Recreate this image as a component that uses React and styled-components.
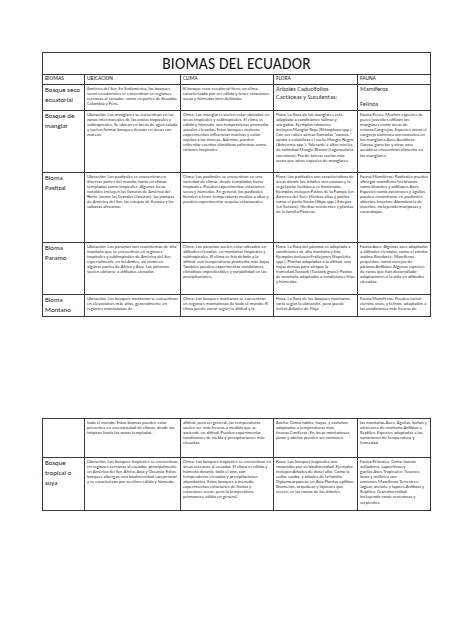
import React from 'react';
import styled, { createGlobalStyle } from 'styled-components';

const GlobalStyle = createGlobalStyle`
    html, body {
        margin: 0;
        padding: 0;
        background: #ffffff;
    }
    body {
        font-family: Carlito, Lato, "Liberation Sans", sans-serif;
        color: #1a1a1a;
    }
`;

const Page = styled.div`
    width: 474px;
    height: 632px;
    overflow: hidden;
    display: flex;
    flex-direction: column;
    padding: ${props => props.$top}px 0 0 42px;
    box-sizing: border-box;
`;

const Table = styled.table`
    width: 388px;
    border-collapse: collapse;
    table-layout: fixed;
    border: 1px solid #3a3a3a;
    flex-shrink: 0;
`;

const Row = styled.tr`
    height: ${props => props.$h}px;
`;

const TitleCell = styled.td`
    border: 1px solid #3a3a3a;
    text-align: center;
    vertical-align: middle;
    font-size: 15.5px;
    font-weight: 300;
    letter-spacing: 0.2px;
    padding: 0;
    color: #111;
`;

const HeadCell = styled.td`
    border: 1px solid #3a3a3a;
    font-size: 5.6px;
    line-height: 6px;
    padding: 1px 2px;
    vertical-align: top;
    text-transform: uppercase;
    color: #222;
`;

const NameCell = styled.td`
    border: 1px solid #3a3a3a;
    font-size: 6.9px;
    line-height: 10px;
    padding: 0 2px;
    vertical-align: top;
    color: #222;
`;

const TextCell = styled.td`
    border: 1px solid #3a3a3a;
    font-size: ${props => (props.$big ? '6.4px' : '4.6px')};
    line-height: ${props => (props.$big ? '7.6px' : '5.1px')};
    padding: 1px 2px;
    vertical-align: top;
    color: #333;
    word-wrap: break-word;
`;

const Clip = styled.div`
    max-height: ${props => props.$max}px;
    overflow: hidden;
`;

const Gap = styled.div`
    height: ${props => props.$h}px;
    flex-shrink: 0;
`;

const widths = [42, 96, 93, 84, 73];

const headers = ['Biomas', 'Ubicacion', 'Clima', 'Flora', 'Fauna'];

const firstPage = [
    {
        h: 62,
        name: 'Bosque de manglar',
        cells: [
            'Ubicación: Los manglares se encuentran en las zonas intermareales de las costas tropicales y subtropicales. Se ubican en áreas de agua salada y suelen formar bosques densos en áreas con mareas.',
            'Clima: Los manglares suelen estar ubicados en áreas tropicales y subtropicales. El clima es cálido y húmedo, con temperaturas promedio anuales elevadas. Estos bosques costeros experimentan influencias marinas y están sujetos a las mareas. Además, pueden enfrentar eventos climáticos extremos como ciclones tropicales.',
            'Flora: La flora de los manglares está adaptada a condiciones salinas y anegadas. Ejemplos comunes incluyen:Manglar Rojo (Rhizophora spp.): Con sus raíces aéreas llamadas "zancos," ayuda a estabilizar el suelo.Mangle Negro (Avicennia spp.): Tolerante a altos niveles de salinidad.Mangle Blanco (Laguncularia racemosa): Puede tolerar suelos más secos que otras especies de manglares.',
            'Fauna:Peces: Muchos especies de peces juveniles utilizan los manglares como áreas de crianza.Cangrejos: Especies como el cangrejo violinista son comunes en los manglares.Aves Acuáticas: Garzas, garcetas y otras aves acuáticas encuentran alimento en los manglares.',
        ],
    },
    {
        h: 70,
        name: 'Bioma Pastizal',
        cells: [
            'Ubicación: Los pastizales se encuentran en diversas partes del mundo, tanto en climas templados como tropicales. Algunas áreas notables incluyen las llanuras de América del Norte (como las Grandes Llanuras), las pampas de América del Sur, las estepas de Eurasia y las sabanas africanas.',
            'Clima: Los pastizales se encuentran en una variedad de climas, desde templados hasta tropicales. Pueden experimentar estaciones secas y húmedas. En general, los pastizales tienden a tener temperaturas medias a altas y pueden experimentar sequías estacionales.',
            'Flora: Los pastizales son característicos de áreas donde los árboles son escasos y la vegetación herbácea es dominante. Ejemplos incluyen:Pastos de la Pampa (en América del Sur): Hierbas altas y pastos como el pasto llorón (Stipa spp.).Estepas (en Eurasia): Hierbas resistentes y plantas de la familia Poaceae.',
            'Fauna:Mamíferos: Pastizales pueden albergar mamíferos herbívoros como bisontes y antílopes.Aves: Especies como avestruces y águilas pueden encontrarse en pastizales abiertos.Insectos: Abundancia de insectos, incluyendo mariposas y escarabajos.',
        ],
    },
    {
        h: 52,
        name: 'Bioma Paramo',
        cells: [
            'Ubicación: Los páramos son ecosistemas de alta montaña que se encuentran en regiones tropicales y subtropicales de América del Sur, especialmente en los Andes, así como en algunas partes de África y Asia. Los páramos suelen ubicarse a altitudes elevadas',
            'Clima: Los páramos suelen estar ubicados en altitudes elevadas, en montañas tropicales y subtropicales. El clima es frío debido a la altitud, con temperaturas promedio más bajas. También pueden experimentar condiciones climáticas impredecibles y variabilidad en las precipitaciones.',
            'Flora: La flora del páramo es adaptada a condiciones de alta montaña y frío. Ejemplos incluyen:Frailejones (Espeletia spp.): Plantas adaptadas a la altitud, con hojas densas para atrapar la humedad.Tussock (Tussock grass): Pastos de montaña adaptados a condiciones frías y húmedas.',
            'Fauna:Aves: Algunas aves adaptadas a altitudes elevadas, como el cóndor andino.Roedores: Mamíferos pequeños, como conejos de páramo.Anfibios: Algunas especies de ranas que han desarrollado adaptaciones a la vida en altitudes elevadas.',
        ],
    },
    {
        h: 22,
        clip: 15,
        name: 'Bioma Montano',
        cells: [
            'Ubicación: Los bosques montanos se encuentran en elevaciones más altas, generalmente en regiones montañosas de',
            'Clima: Los bosques montanos se encuentran en regiones montañosas de todo el mundo. El clima puede variar según la altitud y la',
            'Flora: La flora de los bosques montanos varía según la ubicación, pero puede incluir:Árboles de Hoja',
            'Fauna:Mamíferos: Pueden incluir ciervos, osos, y felinos, adaptados a las condiciones más frescas de',
        ],
    },
];

const secondPage = [
    {
        h: 39,
        name: '',
        cells: [
            'todo el mundo. Estos biomas pueden estar presentes en una variedad de climas, desde los trópicos hasta las zonas templadas.',
            'altitud, pero en general, las temperaturas suelen ser más frescas a medida que se asciende en altitud. Pueden experimentar condiciones de niebla y precipitaciones más elevadas.',
            'Ancha: Como robles, hayas, y castaños, adaptados a temperaturas más frescas.Coníferas: En áreas montañosas, pinos y abetos pueden ser comunes.',
            'las montañas.Aves: Águilas, búhos y otras aves de montaña.Anfibios y Reptiles: Especies adaptadas a las variaciones de temperatura y humedad.',
        ],
    },
    {
        h: 53,
        name: 'Bosque tropical o suya',
        cells: [
            'Ubicación: Los bosques tropicales se encuentran en regiones cercanas al ecuador, principalmente en América del Sur, África, Asia y Oceanía. Estos bosques albergan una biodiversidad excepcional y se caracterizan por su clima cálido y húmedo.',
            'Clima: Los bosques tropicales se encuentran en áreas cercanas al ecuador. El clima es cálido y húmedo durante todo el año, con temperaturas elevadas y precipitaciones abundantes. Estos bosques a menudo experimentan estaciones de lluvias y estaciones secas, pero la temperatura permanece cálida en general.',
            'Flora: Los bosques tropicales son conocidos por su biodiversidad. Ejemplos incluyen:Árboles de dosel alto: Como la ceiba, caoba, y árboles de la familia Dipterocarpaceae en Asia.Plantas epífitas: Bromelias, orquídeas y líquenes que crecen en las ramas de los árboles.',
            'Fauna:Primates: Como monos aulladores, capuchinos y gorilas.Aves Tropicales: Tucanes, loros y colibríes son comunes.Mamíferos Terrestres: Jaguar, ocelote y tapires.Anfibios y Reptiles: Gran diversidad, incluyendo ranas venenosas y serpientes.',
        ],
    },
];

const Cols = () => (
    <colgroup>
        {widths.map((w, i) => <col key={'c' + i} style={{ width: w }} />)}
    </colgroup>
);

const BiomeRow = ({ row }) => (
    <Row $h={row.h}>
        <NameCell>{row.name}</NameCell>
        {row.cells.map((text, i) => (
            <TextCell key={row.name + i}>
                {row.clip ? <Clip $max={row.clip}>{text}</Clip> : text}
            </TextCell>
        ))}
    </Row>
);

const App = () => {
    return (
        <>
            <GlobalStyle />
            <Page $top={52}>
                <Table>
                    <Cols />
                    <tbody>
                        <Row $h={22}>
                            <TitleCell colSpan={5}>BIOMAS DEL ECUADOR</TitleCell>
                        </Row>
                        <Row $h={10}>
                            {headers.map(h => <HeadCell key={h}>{h}</HeadCell>)}
                        </Row>
                        <Row $h={24}>
                            <NameCell>Bosque seco ecuatorial</NameCell>
                            <TextCell>
                                América del Sur: En Sudamérica, los bosques secos ecuatoriales se encuentran en regiones cercanas al ecuador, como en partes de Ecuador, Colombia y Perú.
                            </TextCell>
                            <TextCell>
                                El bosque seco ecuatorial tiene un clima caracterizado por ser cálido y tener estaciones secas y húmedas bien definidas.
                            </TextCell>
                            <TextCell $big>
                                Árboles Caducifolios<br />Cactáceas y Suculentas:
                            </TextCell>
                            <TextCell $big>
                                Mamíferos<br /><br />Felinos
                            </TextCell>
                        </Row>
                        {firstPage.map(row => <BiomeRow key={row.name} row={row} />)}
                    </tbody>
                </Table>
                <Gap $h={101} />
                <Table>
                    <Cols />
                    <tbody>
                        {secondPage.map((row, i) => <BiomeRow key={'p2-' + i} row={row} />)}
                    </tbody>
                </Table>
            </Page>
        </>
    );
};

export default App;
